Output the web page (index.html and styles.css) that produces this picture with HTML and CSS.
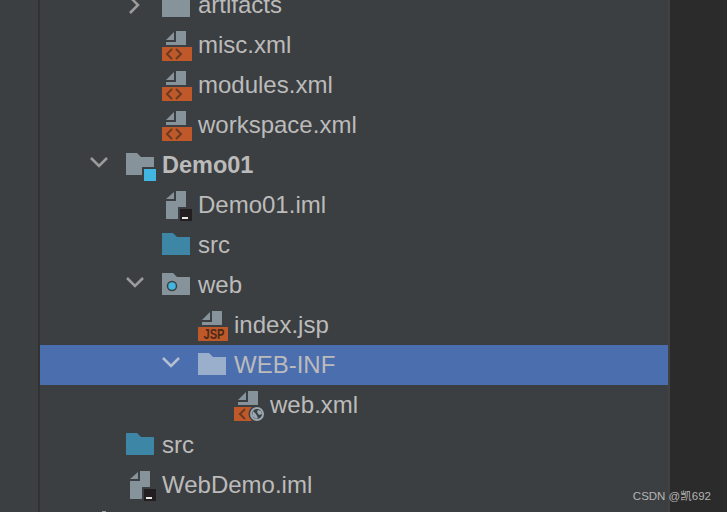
FILE: index.html
```html
<!DOCTYPE html>
<html lang="en">
<head>
<meta charset="utf-8">
<title>Project tree</title>
<link rel="stylesheet" href="styles.css">
</head>
<body>
<svg class="defs" width="0" height="0" aria-hidden="true">
  <defs>
    <g id="page"><path d="M14 0h10v14H4v-3h10z"/><path d="M12 1v8H4z"/></g>
    <g id="xml">
      <use href="#page" class="g"/>
      <rect y="16" width="30" height="14" class="o"/>
      <path d="M10 18l-5 5 5 5M14 18l5 5-5 5" class="code"/>
    </g>
    <path id="folder" d="M0 0h11l4 4h13v18H0z"/>
    <g id="iml">
      <path d="M14 0h10v28H4V10h10z" class="g"/><path d="M12 1v7H4z" class="g"/>
      <rect x="16" y="16" width="14" height="14" class="edge"/>
      <rect x="18" y="18" width="12" height="12" class="blk"/>
      <rect x="20" y="26" width="6" height="2" class="wht"/>
    </g>
  </defs>
</svg>
<main class="window">
  <div class="gutter"></div>
  <section class="tree">
    <div class="row first d1">
      <span class="arrow"><svg width="36" height="40" viewBox="0 0 36 40"><path d="M4 12l8 8-8 8" class="chev"/></svg></span>
      <svg class="icon" width="30" height="30" viewBox="0 0 30 30"><use href="#folder" class="g" y="4"/></svg>
      <span class="label">artifacts</span>
    </div>
    <div class="row d1">
      <span class="arrow"></span>
      <svg class="icon" width="30" height="30" viewBox="0 0 30 30"><use href="#xml"/></svg>
      <span class="label">misc.xml</span>
    </div>
    <div class="row d1">
      <span class="arrow"></span>
      <svg class="icon" width="30" height="30" viewBox="0 0 30 30"><use href="#xml"/></svg>
      <span class="label">modules.xml</span>
    </div>
    <div class="row d1">
      <span class="arrow"></span>
      <svg class="icon" width="30" height="30" viewBox="0 0 30 30"><use href="#xml"/></svg>
      <span class="label">workspace.xml</span>
    </div>
    <div class="row d0">
      <span class="arrow"><svg width="36" height="40" viewBox="0 0 36 40"><path d="M1 13l8 8 8-8" class="chev"/></svg></span>
      <svg class="icon" width="30" height="30" viewBox="0 0 30 30">
        <use href="#folder" class="g" y="2"/>
        <rect x="16" y="16" width="14" height="16" class="edge"/>
        <rect x="18" y="18" width="12" height="12" class="mod"/>
      </svg>
      <span class="label bold">Demo01</span>
    </div>
    <div class="row d1">
      <span class="arrow"></span>
      <svg class="icon" width="30" height="30" viewBox="0 0 30 30"><use href="#iml"/></svg>
      <span class="label">Demo01.iml</span>
    </div>
    <div class="row d1">
      <span class="arrow"></span>
      <svg class="icon" width="30" height="30" viewBox="0 0 30 30"><use href="#folder" class="b" y="2"/></svg>
      <span class="label">src</span>
    </div>
    <div class="row d1">
      <span class="arrow"><svg width="36" height="40" viewBox="0 0 36 40"><path d="M1 13l8 8 8-8" class="chev"/></svg></span>
      <svg class="icon" width="30" height="30" viewBox="0 0 30 30">
        <use href="#folder" class="g" y="2"/>
        <circle cx="10" cy="15" r="4.500" class="dot"/>
      </svg>
      <span class="label">web</span>
    </div>
    <div class="row d2">
      <span class="arrow"></span>
      <svg class="icon" width="30" height="30" viewBox="0 0 30 30">
        <use href="#page" class="g"/>
        <rect y="16" width="30" height="14" class="o"/>
        <text x="5.500" y="28" class="jsp" textLength="21" lengthAdjust="spacingAndGlyphs">JSP</text>
      </svg>
      <span class="label">index.jsp</span>
    </div>
    <div class="row d2 selected">
      <span class="arrow"><svg width="36" height="40" viewBox="0 0 36 40"><path d="M1 13l8 8 8-8" class="chev"/></svg></span>
      <svg class="icon" width="30" height="30" viewBox="0 0 30 30"><use href="#folder" class="s" y="2"/></svg>
      <span class="label">WEB-INF</span>
    </div>
    <div class="row d3">
      <span class="arrow"></span>
      <svg class="icon" width="30" height="30" viewBox="0 0 30 30">
        <use href="#page" class="g"/>
        <rect y="16" width="22" height="14" class="o"/>
        <path d="M11 18l-5 5 5 5" class="code"/>
        <circle cx="23" cy="23" r="8.500" class="edge"/>
        <circle cx="23" cy="23" r="7" class="globe"/>
        <circle cx="23" cy="23" r="5" class="cont"/>
        <path d="M19 20l3 3 2 4-2 1-4-3zM24 19l3 1 1 3-3 1-2-3z" class="globe"/>
      </svg>
      <span class="label">web.xml</span>
    </div>
    <div class="row d0">
      <span class="arrow"></span>
      <svg class="icon" width="30" height="30" viewBox="0 0 30 30"><use href="#folder" class="b" y="2"/></svg>
      <span class="label">src</span>
    </div>
    <div class="row d0">
      <span class="arrow"></span>
      <svg class="icon" width="30" height="30" viewBox="0 0 30 30"><use href="#iml"/></svg>
      <span class="label">WebDemo.iml</span>
    </div>
    <div class="row d0">
      <span class="arrow"><svg width="36" height="40" viewBox="0 0 36 40"><path d="M12 6h4v2h-4z" class="tip"/></svg></span>
    </div>
  </section>
  <div class="sidebar"></div>
  <div class="mark">CSDN @凯692</div>
</main>
</body>
</html>
```
FILE: styles.css
```css
html, body {
  margin: 0;
  padding: 0;
  height: 100%;
  overflow: hidden;
}
.defs {
  display: block;
  height: 0;
}
.window {
  position: relative;
  display: flex;
  height: 512px;
  background: #3c3f41;
  font-family: "Liberation Sans", Arial, "Noto Sans CJK SC", sans-serif;
  overflow: hidden;
}
.gutter {
  flex: 0 0 38px;
  border-right: 2px solid #323232;
}
.tree {
  flex: 0 0 628px;
  overflow: hidden;
}
.sidebar {
  flex: 1;
  background: #2b2b2b;
  border-left: 2px solid #414141;
}
.row {
  display: flex;
  align-items: center;
  height: 40px;
  color: #bbbbbb;
  font-size: 24px;
}
.row.first { margin-top: -15px; }
.d0 { padding-left: 50px; }
.d1 { padding-left: 86px; }
.d2 { padding-left: 122px; }
.d3 { padding-left: 158px; }
.selected { background: #4b6eaf; }
.arrow {
  flex: 0 0 36px;
  height: 40px;
}
.arrow svg { display: block; }
.icon {
  flex: 0 0 30px;
  margin-top: 2px;
  overflow: visible;
}
.label {
  margin-left: 6px;
  white-space: nowrap;
}
.bold {
  font-weight: 700;
  font-size: 23.5px;
}
.g { fill: #87939a; }
.b { fill: #3d86a5; }
.s { fill: #9aafcb; }
.o { fill: #c0592a; }
.mod { fill: #40b6e0; }
.edge { fill: #3c3f41; }
.blk { fill: #231f20; }
.wht { fill: #e8e8e8; }
.code {
  fill: none;
  stroke: #6a3a22;
  stroke-width: 2;
}
.chev {
  fill: none;
  stroke: #9c9c9c;
  stroke-width: 2.5;
}
.selected .chev { stroke: #b4bfd2; }
.tip { fill: #9c9c9c; }
.dot {
  fill: #40b6e0;
  stroke: #3c3f41;
  stroke-width: 1.500;
}
.globe { fill: #9aa7b0; }
.cont { fill: #3c3f41; }
.jsp {
  font-size: 14px;
  font-weight: 700;
  fill: #4a2a18;
}
.mark {
  position: absolute;
  right: 16px;
  bottom: 9px;
  color: #b4b4b4;
  font-size: 11.500px;
  white-space: nowrap;
}
```
